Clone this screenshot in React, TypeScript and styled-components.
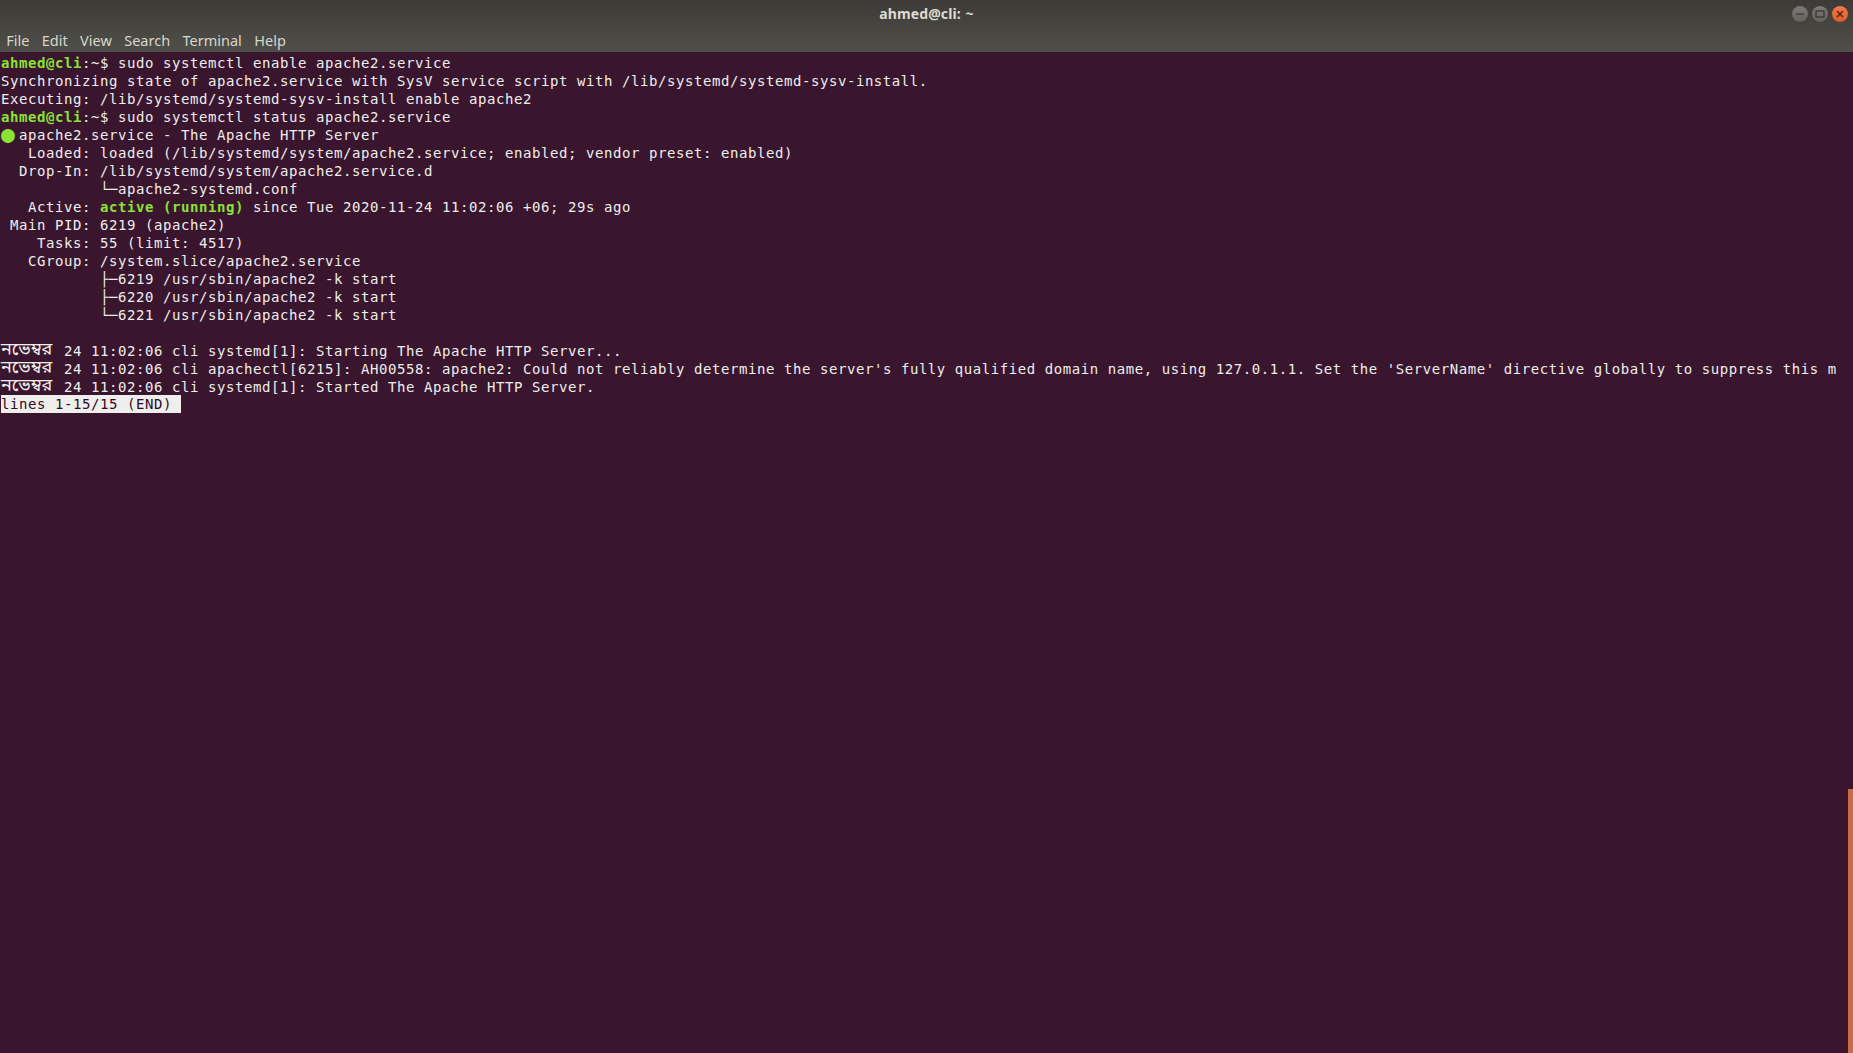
import React from "react";
import styled, { createGlobalStyle } from "styled-components";

const GlobalStyle = createGlobalStyle`
  html,
  body {
    margin: 0;
    height: 100%;
    overflow: hidden;
    background: #3a152e;
  }

  #root {
    height: 100%;
  }
`;

const month = "নভেম্বর";

const menus = ["File", "Edit", "View", "Search", "Terminal", "Help"];

const Window = styled.div`
  position: relative;
  display: flex;
  flex-direction: column;
  height: 100%;
  overflow: hidden;
  background: #3a152e;
`;

const Header = styled.header`
  background: linear-gradient(#3c3b37, #504f49);
  flex-shrink: 0;
`;

const TitleBar = styled.div`
  display: grid;
  grid-template-columns: 1fr auto 1fr;
  align-items: center;
  height: 27px;
`;

const Title = styled.div`
  grid-column: 2;
  font-family: "Noto Sans", sans-serif;
  font-size: 14px;
  font-weight: 700;
  letter-spacing: 0.1px;
  word-spacing: 1px;
  color: #dfdbd2;
`;

const Controls = styled.div`
  grid-column: 3;
  justify-self: end;
  display: flex;
  gap: 4px;
  padding-right: 5px;
`;

const Control = styled.button<{ $close?: boolean }>`
  display: flex;
  align-items: center;
  justify-content: center;
  width: 16px;
  height: 16px;
  padding: 0;
  border: 0;
  border-radius: 50%;
  background: ${(p) =>
    p.$close
      ? "linear-gradient(#f27a4c, #df5a28)"
      : "linear-gradient(#7b7a76, #62615c)"};
  box-shadow: 0 0 1px #2e2d2a;
`;

const MenuBar = styled.nav`
  display: flex;
  align-items: center;
  height: 25px;
`;

const MenuItem = styled.span`
  padding: 0 6.2px;
  font-family: "Noto Sans", sans-serif;
  font-size: 14.5px;
  color: #d8d6cd;
`;

const Screen = styled.main`
  flex: 1;
  padding: 2px 0 0 1px;
  font-family: "DejaVu Sans Mono", monospace;
  font-size: 14px;
  letter-spacing: 0.57px;
  color: #eeeeec;
`;

const Line = styled.div`
  height: 18px;
  line-height: 18px;
  white-space: pre;
`;

const Green = styled.b`
  color: #8ae234;
`;

const Dot = styled.span`
  display: inline-block;
  width: 18px;
  height: 18px;
  font-size: 23px;
  line-height: 16px;
  letter-spacing: 0;
  color: #8ae234;
  vertical-align: top;
`;

const Month = styled.span`
  display: inline-block;
  width: 54px;
  height: 18px;
  font-family: "Noto Sans Bengali", "Noto Sans", sans-serif;
  font-size: 18px;
  line-height: 16px;
  letter-spacing: 0;
  vertical-align: top;
`;

const Pager = styled.div`
  width: fit-content;
  height: 18px;
  margin-top: -1px;
  padding-right: 9px;
  background: #eeeeec;
  color: #300a24;
`;

const ScrollThumb = styled.div`
  position: absolute;
  right: 0;
  bottom: 0;
  width: 5px;
  height: 264px;
  background: #cc6a45;
`;

const Prompt = () => (
  <>
    <Green>ahmed@cli</Green>:~$
  </>
);

const App = () => {
  return (
    <Window>
      <GlobalStyle />
      <Header>
        <TitleBar>
          <Title>ahmed@cli: ~</Title>
          <Controls>
            <Control aria-label="Minimize">
              <svg width="10" height="10" viewBox="0 0 10 10">
                <path d="M1 5h8" stroke="#33322f" strokeWidth="1.2" />
              </svg>
            </Control>
            <Control aria-label="Maximize">
              <svg width="10" height="10" viewBox="0 0 10 10">
                <rect x="1" y="2" width="8" height="6" fill="none" stroke="#33322f" strokeWidth="1.2" />
              </svg>
            </Control>
            <Control $close aria-label="Close">
              <svg width="10" height="10" viewBox="0 0 10 10">
                <path d="M2 2l6 6M8 2l-6 6" stroke="#4a2415" strokeWidth="1.4" />
              </svg>
            </Control>
          </Controls>
        </TitleBar>
        <MenuBar>
          {menus.map((m) => (
            <MenuItem key={m}>{m}</MenuItem>
          ))}
        </MenuBar>
      </Header>
      <Screen>
        <Line>
          <Prompt /> sudo systemctl enable apache2.service
        </Line>
        <Line>Synchronizing state of apache2.service with SysV service script with /lib/systemd/systemd-sysv-install.</Line>
        <Line>Executing: /lib/systemd/systemd-sysv-install enable apache2</Line>
        <Line>
          <Prompt /> sudo systemctl status apache2.service
        </Line>
        <Line>
          <Dot>●</Dot>apache2.service - The Apache HTTP Server
        </Line>
        <Line>   Loaded: loaded (/lib/systemd/system/apache2.service; enabled; vendor preset: enabled)</Line>
        <Line>  Drop-In: /lib/systemd/system/apache2.service.d</Line>
        <Line>           └─apache2-systemd.conf</Line>
        <Line>
          {"   Active: "}
          <Green>active (running)</Green> since Tue 2020-11-24 11:02:06 +06; 29s ago
        </Line>
        <Line> Main PID: 6219 (apache2)</Line>
        <Line>    Tasks: 55 (limit: 4517)</Line>
        <Line>   CGroup: /system.slice/apache2.service</Line>
        <Line>           ├─6219 /usr/sbin/apache2 -k start</Line>
        <Line>           ├─6220 /usr/sbin/apache2 -k start</Line>
        <Line>           └─6221 /usr/sbin/apache2 -k start</Line>
        <Line />
        <Line>
          <Month>{month}</Month> 24 11:02:06 cli systemd[1]: Starting The Apache HTTP Server...
        </Line>
        <Line>
          <Month>{month}</Month> 24 11:02:06 cli apachectl[6215]: AH00558: apache2: Could not reliably determine the server's fully qualified domain name, using 127.0.1.1. Set the 'ServerName' directive globally to suppress this m
        </Line>
        <Line>
          <Month>{month}</Month> 24 11:02:06 cli systemd[1]: Started The Apache HTTP Server.
        </Line>
        <Line>
          <Pager>lines 1-15/15 (END)</Pager>
        </Line>
      </Screen>
      <ScrollThumb />
    </Window>
  );
};

export default App;
